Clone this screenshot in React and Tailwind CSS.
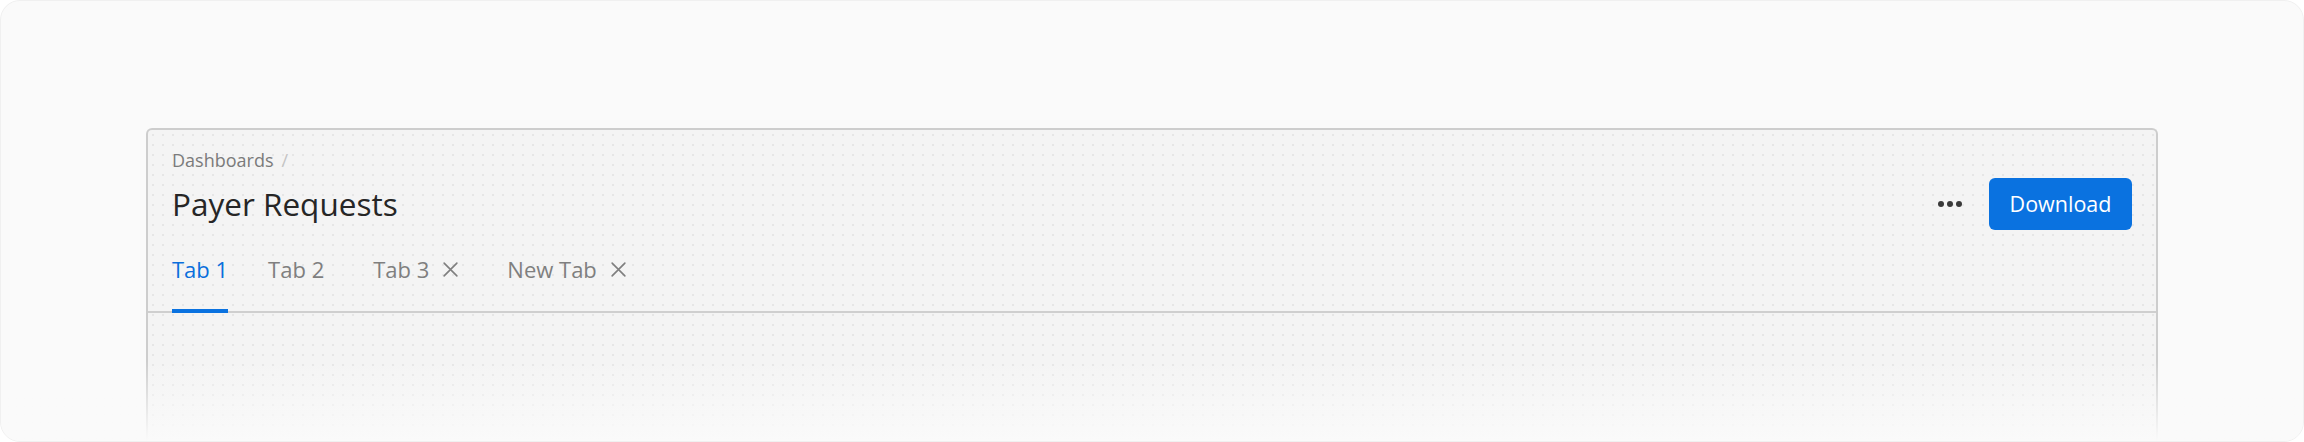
import React from "react";

const tabs = [
  { label: "Tab 1", active: true, ml: "ml-0" },
  { label: "Tab 2", ml: "ml-[40px]" },
  { label: "Tab 3", closable: true, ml: "ml-[49px]" },
  { label: "New Tab", closable: true, ml: "ml-[48px]" },
];

function CloseIcon() {
  return (
    <svg width="17" height="17" viewBox="0 0 16 16" fill="none" stroke="currentColor" strokeWidth="1.5" strokeLinecap="round">
      <path d="M2 2L14 14M14 2L2 14" />
    </svg>
  );
}

export default function App() {
  return (
    <div className="h-[442px] w-full bg-white font-['Open_Sans',sans-serif]">
      <div className="relative h-[442px] overflow-hidden rounded-[20px] border border-[#f0f0f0] bg-[#fafafa] px-[145px] pt-[127px]">
        <div className="h-full rounded-t-[6px] border-x-2 border-t-2 border-[#cdcdcd] bg-[#f4f4f4] bg-[radial-gradient(#e6e6e6_1px,transparent_1px)] bg-[size:10px_10px]">
          <div className="px-[24px] pt-[17px]">
            <div className="flex items-center gap-2 text-[18px] text-[#7b7b7b]">
              <span>Dashboards</span>
              <span className="text-[#c4c4c4]">/</span>
            </div>
            <div className="mt-[4px] flex items-center justify-between">
              <h1 className="text-[31.5px] font-normal text-[#262626]">Payer Requests</h1>
              <div className="flex items-center gap-[27px]">
                <button className="flex items-center gap-[3px] text-[#333]">
                  <span className="h-[6px] w-[6px] rounded-full bg-[#3a3a3a]" />
                  <span className="h-[6px] w-[6px] rounded-full bg-[#3a3a3a]" />
                  <span className="h-[6px] w-[6px] rounded-full bg-[#3a3a3a]" />
                </button>
                <button className="h-[52px] w-[143px] rounded-[6px] bg-[#0a72e0] text-[21.5px] text-white">
                  Download
                </button>
              </div>
            </div>
            <div className="mt-[23px] flex items-end">
              {tabs.map((t) => (
                <div
                  key={t.label}
                  className={`${t.ml} flex items-center gap-[13px] border-b-4 pb-[23px] text-[22px] ${
                    t.active ? "border-[#0a72e0] text-[#0a6fdc]" : "border-transparent text-[#7f7f7f]"
                  }`}
                >
                  <span>{t.label}</span>
                  {t.closable && <CloseIcon />}
                </div>
              ))}
            </div>
          </div>
          <div className="-mt-[2px] h-[2px] bg-[#cfcfcf]" />
        </div>
        <div className="pointer-events-none absolute inset-x-0 bottom-0 h-[80px] bg-gradient-to-b from-transparent to-[#fafafa]" />
      </div>
    </div>
  );
}
